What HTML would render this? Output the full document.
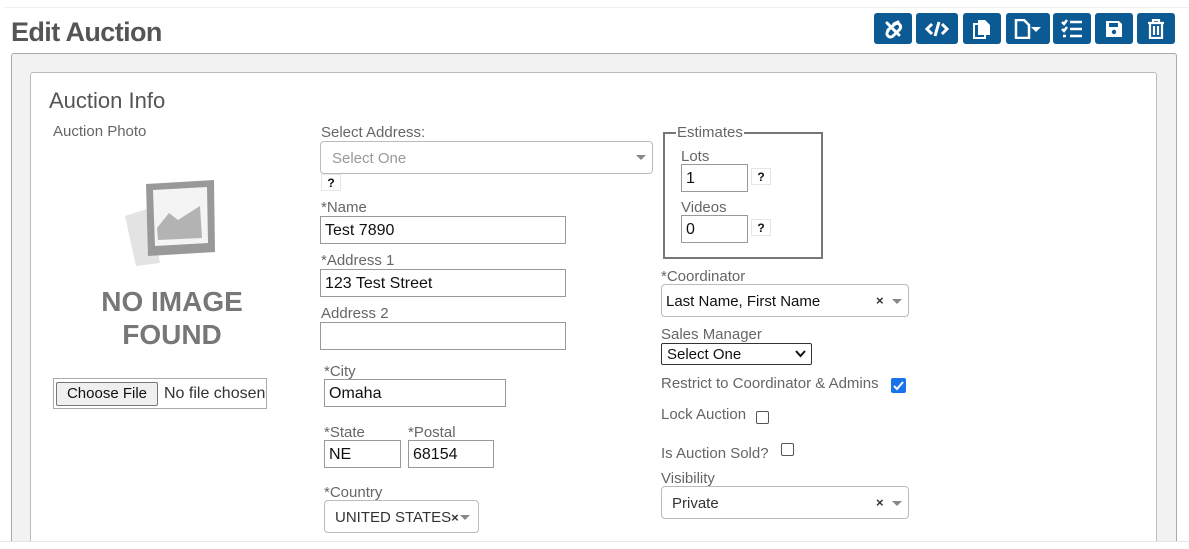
<!DOCTYPE html>
<html><head><meta charset="utf-8"><style>
html,body{margin:0;width:1189px;height:549px;overflow:hidden}
body{background:#fff;font-family:"Liberation Sans",sans-serif;position:relative;color:#666}
.a{position:absolute}
.btn{position:absolute;top:13px;height:31px;background:#0b5a94;border-radius:3px;display:flex;align-items:center;justify-content:center}
.lbl{position:absolute;font-size:15px;color:#666;white-space:nowrap}
.inp{position:absolute;border:1px solid #999;height:26px;box-sizing:border-box;font-size:16px;color:#111;padding:5px 4px 0;background:#fff}
.sel2{position:absolute;border:1px solid #bbb;border-radius:4px;box-sizing:border-box;background:#fff;font-size:16px;color:#333}
.q{position:absolute;width:20px;height:17px;background:#fff;border:1px solid #e6e6e6;font-size:12px;font-weight:bold;color:#111;text-align:center;line-height:16px;box-sizing:border-box}
.arr{position:absolute;width:0;height:0;border-left:5px solid transparent;border-right:5px solid transparent;border-top:5px solid #888}
.cb{position:absolute;width:13px;height:13px;border:1px solid #555;border-radius:2px;box-sizing:border-box;background:#fff}
</style></head><body>
<div class="a" style="left:5px;top:7px;width:1184px;height:1px;background:#eee"></div>
<div class="a" style="left:11px;top:17px;font-size:27px;font-weight:bold;color:#555;letter-spacing:-0.6px">Edit Auction</div>

<div class="btn" style="left:874px;width:38px"><svg width="20" height="20" viewBox="0 0 20 20" fill="none" stroke="#fff" stroke-width="3" stroke-linecap="round"><path d="M4 4 L16 16 M5 12 a3.5 3.5 0 0 0 5 5 L16 11 a3.5 3.5 0 0 0 -4 -6 L5 11 M11 5 L15 3"/></svg></div>
<div class="btn" style="left:916px;width:42px"><svg width="24" height="18" viewBox="0 0 24 18" fill="none" stroke="#fff" stroke-width="3"><path d="M7 4 L2 9 L7 14 M17 4 L22 9 L17 14 M14 2 L10 16"/></svg></div>
<div class="btn" style="left:963px;width:38px"><svg width="18" height="20" viewBox="0 0 18 20"><rect x="1" y="5" width="11" height="14" fill="none" stroke="#fff" stroke-width="2"/><path d="M5 1 H12 L17 6 V16 H5 Z" fill="#fff"/></svg></div>
<div class="btn" style="left:1006px;width:44px"><svg width="28" height="20" viewBox="0 0 28 20"><path d="M2 1 H10 L15 6 V19 H2 Z" fill="none" stroke="#fff" stroke-width="2.5"/><path d="M17 8 H27 L22 13 Z" fill="#fff"/></svg></div>
<div class="btn" style="left:1053px;width:38px"><svg width="22" height="20" viewBox="0 0 22 20" stroke="#fff" stroke-width="2.5" fill="none"><path d="M1 3 L3 5 L6 1 M1 10 L3 12 L6 8 M9 3 H21 M9 10 H21 M9 17 H21 M2 17 H5"/></svg></div>
<div class="btn" style="left:1095px;width:38px"><svg width="18" height="18" viewBox="0 0 18 18"><path d="M1 1 H14 L17 4 V17 H1 Z" fill="#fff"/><rect x="4" y="3" width="9" height="4" fill="#0b5a94"/><circle cx="9" cy="12" r="2.2" fill="#0b5a94"/></svg></div>
<div class="btn" style="left:1137px;width:38px"><svg width="18" height="20" viewBox="0 0 18 20" fill="none" stroke="#fff" stroke-width="2.2"><path d="M1 4 H17 M6 4 V1 H12 V4 M3 4 V19 H15 V4 M7 7 V16 M11 7 V16"/></svg></div>

<div class="a" style="left:11px;top:53px;width:1164px;height:510px;background:#f2f2f2;border:1px solid #aaa;border-radius:3px"></div>
<div class="a" style="left:30px;top:72px;width:1125px;height:490px;background:#fff;border:1px solid #bbb;border-radius:3px"></div>
<div class="a" style="left:49px;top:88px;font-size:22px;color:#555">Auction Info</div>
<div class="lbl" style="left:53px;top:123px;font-size:15px">Auction Photo</div>

<svg class="a" style="left:120px;top:178px" width="100" height="90" viewBox="0 0 100 90"><path d="M5 38 L30 30 L40 85 L16 88 Z" fill="#e3e3e3"/><path d="M26 6 L94 2 L95 74 L28 78 Z" fill="#999"/><path d="M33 12 L87 9 L88 65 L35 68 Z" fill="#f4f4f4"/><path d="M37 50 L49 35 L58 42 L80 28 L82 60 L38 62 Z" fill="#b3b3b3"/></svg>
<div class="a" style="left:72px;top:285px;width:200px;text-align:center;font-size:28px;font-weight:bold;color:#777;line-height:33px;white-space:nowrap">NO IMAGE<br>FOUND</div>
<div class="a" style="left:53px;top:378px;width:214px;height:31px;border:1px solid #aaa;box-sizing:border-box"></div>
<div class="a" style="left:56px;top:382px;width:102px;height:24px;border:1px solid #777;border-radius:2px;background:#efefef;box-sizing:border-box;font-size:15px;color:#111;text-align:center;line-height:22px">Choose File</div>
<div class="a" style="left:164px;top:385px;font-size:16px;color:#333">No file chosen</div>

<div class="lbl" style="left:321px;top:124px">Select Address:</div>
<div class="sel2" style="left:320px;top:141px;width:333px;height:33px;color:#999;padding:8px 11px;font-size:15px">Select One</div>
<div class="arr" style="left:636px;top:155px"></div>
<div class="q" style="left:321px;top:174px">?</div>
<div class="lbl" style="left:321px;top:199px">*Name</div>
<div class="inp" style="left:320px;top:216px;width:246px;height:28px">Test 7890</div>
<div class="lbl" style="left:321px;top:252px">*Address 1</div>
<div class="inp" style="left:320px;top:269px;width:246px;height:28px">123 Test Street</div>
<div class="lbl" style="left:321px;top:305px">Address 2</div>
<div class="inp" style="left:320px;top:322px;width:246px;height:28px"></div>
<div class="lbl" style="left:324px;top:363px">*City</div>
<div class="inp" style="left:324px;top:379px;width:182px;height:28px">Omaha</div>
<div class="lbl" style="left:324px;top:424px">*State</div>
<div class="inp" style="left:324px;top:440px;width:77px;height:28px">NE</div>
<div class="lbl" style="left:408px;top:424px">*Postal</div>
<div class="inp" style="left:408px;top:440px;width:86px;height:28px">68154</div>
<div class="lbl" style="left:324px;top:484px">*Country</div>
<div class="sel2" style="left:324px;top:500px;width:155px;height:33px;padding:8px 10px;font-size:15px">UNITED STATES<span style="font-size:13px;font-weight:bold">×</span></div>
<div class="arr" style="left:460px;top:515px"></div>

<div class="a" style="left:663px;top:132px;width:160px;height:127px;border:2px solid #777;box-sizing:border-box"></div>
<div class="lbl" style="left:676px;top:124px;background:#fff;padding:0 1px">Estimates</div>
<div class="lbl" style="left:681px;top:148px">Lots</div>
<div class="inp" style="left:681px;top:164px;width:67px;height:28px">1</div>
<div class="q" style="left:751px;top:168px">?</div>
<div class="lbl" style="left:681px;top:199px">Videos</div>
<div class="inp" style="left:681px;top:215px;width:67px;height:28px">0</div>
<div class="q" style="left:751px;top:219px">?</div>

<div class="lbl" style="left:661px;top:268px">*Coordinator</div>
<div class="sel2" style="left:661px;top:284px;width:248px;height:33px;padding:8px 4px;font-size:15px;color:#111">Last Name, First Name</div>
<div class="a" style="left:876px;top:293px;font-size:13px;font-weight:bold;color:#333">×</div>
<div class="arr" style="left:892px;top:299px"></div>
<div class="lbl" style="left:661px;top:326px">Sales Manager</div>
<div class="a" style="left:661px;top:343px;width:151px;height:22px;border:1px solid #333;border-radius:2px;box-sizing:border-box;font-size:15px;color:#111;padding:2px 5px">Select One</div>
<svg class="a" style="left:795px;top:350px" width="11" height="8" viewBox="0 0 11 8"><path d="M1 1 L5.5 6 L10 1" fill="none" stroke="#111" stroke-width="2"/></svg>
<div class="lbl" style="left:661px;top:375px">Restrict to Coordinator &amp; Admins</div>
<div class="a" style="left:891px;top:378px;width:15px;height:15px;background:#1a73e8;border-radius:2px"><svg width="15" height="15" viewBox="0 0 15 15"><path d="M3 8 L6 11 L12 4" fill="none" stroke="#fff" stroke-width="2"/></svg></div>
<div class="lbl" style="left:661px;top:406px">Lock Auction</div>
<div class="cb" style="left:756px;top:411px"></div>
<div class="lbl" style="left:661px;top:445px">Is Auction Sold?</div>
<div class="cb" style="left:781px;top:443px"></div>
<div class="lbl" style="left:661px;top:470px">Visibility</div>
<div class="sel2" style="left:661px;top:486px;width:248px;height:33px;padding:8px 10px;font-size:15px">Private</div>
<div class="a" style="left:876px;top:495px;font-size:13px;font-weight:bold;color:#333">×</div>
<div class="arr" style="left:892px;top:501px"></div>
<div class="a" style="left:0;top:541px;width:1189px;height:8px;background:#fff;border-top:1px solid #e6e6e6"></div>
</body></html>
